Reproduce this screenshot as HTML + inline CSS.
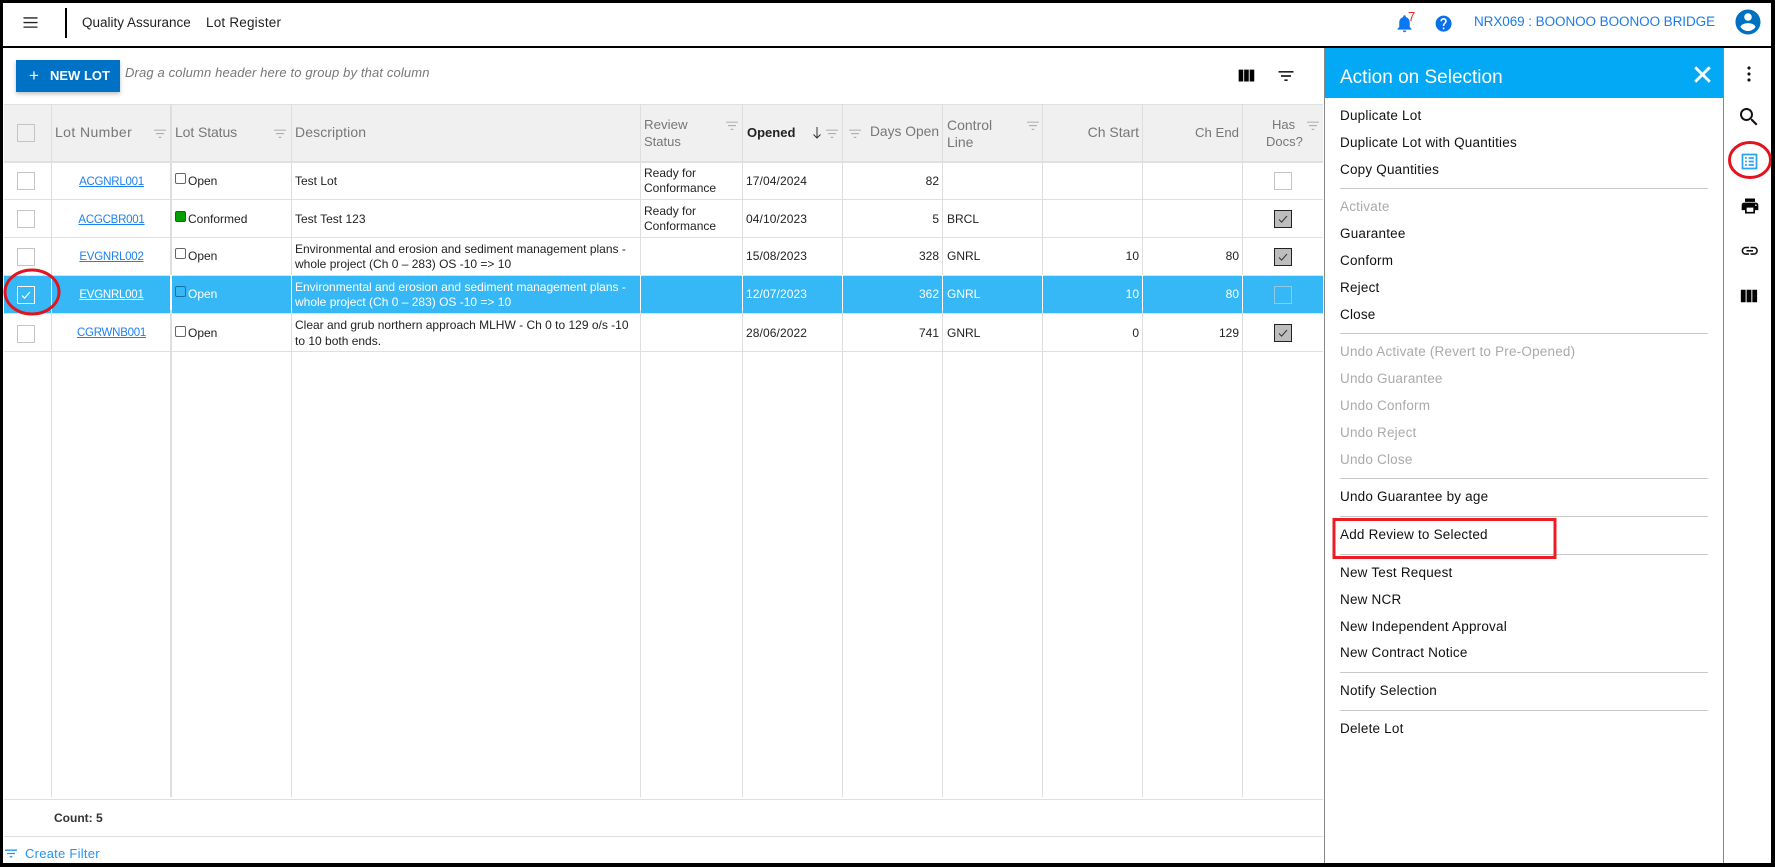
<!DOCTYPE html>
<html lang="en"><head><meta charset="utf-8"><title>Lot Register</title>
<style>
html,body{margin:0;padding:0;background:#fff;}
body{width:1775px;height:867px;overflow:hidden;position:relative;font-family:"Liberation Sans",sans-serif;color:#222;}
.a{position:absolute;}
.t{position:absolute;white-space:nowrap;line-height:16px;font-size:12px;color:#222;}
.h{position:absolute;white-space:nowrap;line-height:18px;font-size:14px;color:#777;}
.m{position:absolute;left:1340px;white-space:nowrap;line-height:18px;font-size:13.5px;color:#111;letter-spacing:.2px;}
.d{color:#aaa;}
.dv{position:absolute;left:1340px;width:368px;height:1px;background:#c8c8c8;}
.v{position:absolute;top:104px;height:693px;width:1px;background:#dedede;}
.r{position:absolute;left:4px;width:1319px;height:1px;background:#e0e0e0;}
.cb{position:absolute;left:17px;width:16px;height:16px;border:1px solid #c4c4c4;background:#fff;}
.ck{position:absolute;left:1274px;width:16px;height:16px;border:1px solid #c4c4c4;background:#fff;}
.on{background:#bdbdbd;border-color:#222;}
.s{position:absolute;left:175px;width:9px;height:9px;border:1px solid #666;border-radius:2px;background:#fff;}
a{color:#1e80f0;text-decoration:underline;}
.l{position:absolute;left:52px;width:119px;text-align:center;line-height:16px;font-size:11.5px;letter-spacing:-.25px;white-space:nowrap;}
.dt{letter-spacing:.1px;}
svg{position:absolute;display:block;}
</style></head><body>

<!-- top bar -->
<svg style="left:19.5px;top:12px" width="21" height="21" viewBox="0 0 24 24" fill="#222"><path d="M4 18h16v-1.5H4V18zm0-5.2h16v-1.5H4v1.5zM4 6v1.5h16V6H4z"/></svg>
<div class="a" style="left:65px;top:8px;width:2px;height:30px;background:#000"></div>
<span class="t" style="left:82px;top:15px;font-size:13.5px;color:#222">Quality Assurance</span>
<span class="t" style="left:206px;top:15px;font-size:13.5px;letter-spacing:.2px;color:#222">Lot Register</span>
<svg style="left:1393.5px;top:12.8px" width="21" height="21" viewBox="0 0 24 24" fill="#0a78f0"><path d="M12 22c1.1 0 2-.9 2-2h-4c0 1.1.89 2 2 2zm6-6v-5c0-3.07-1.64-5.64-4.5-6.32V4c0-.83-.67-1.5-1.5-1.5s-1.5.67-1.5 1.5v.68C7.63 5.36 6 7.92 6 11v5l-2 2v1h16v-1l-2-2z"/></svg>
<span class="t" style="left:1408px;top:9px;font-size:13px;color:#e22">7</span>
<svg style="left:1434.4px;top:14px" width="19.2" height="19.2" viewBox="0 0 24 24" fill="#0a70e8"><path d="M12 2C6.48 2 2 6.48 2 12s4.48 10 10 10 10-4.48 10-10S17.52 2 12 2zm1 17h-2v-2h2v2zm2.07-7.75l-.9.92C13.45 12.9 13 13.5 13 15h-2v-.5c0-1.1.45-2.1 1.17-2.83l1.24-1.26c.37-.36.59-.86.59-1.41 0-1.1-.9-2-2-2s-2 .9-2 2H8c0-2.21 1.79-4 4-4s4 1.79 4 4c0 .88-.36 1.68-.93 2.25z"/></svg>
<span class="t" style="left:1474px;top:14px;font-size:13.5px;letter-spacing:-.07px;color:#1a7de8">NRX069 : BOONOO BOONOO BRIDGE</span>
<svg style="left:1733px;top:7px" width="30" height="30" viewBox="0 0 24 24" fill="#0070c0"><path d="M12 2C6.48 2 2 6.48 2 12s4.48 10 10 10 10-4.48 10-10S17.52 2 12 2zm0 3c1.66 0 3 1.34 3 3s-1.34 3-3 3-3-1.34-3-3 1.34-3 3-3zm0 14.2c-2.5 0-4.71-1.28-6-3.22.03-1.99 4-3.08 6-3.08 1.99 0 5.97 1.09 6 3.08-1.29 1.94-3.5 3.22-6 3.22z"/></svg>
<div class="a" style="left:0;top:46px;width:1775px;height:2px;background:#000"></div>

<!-- toolbar -->
<div class="a" style="left:16px;top:60px;width:104px;height:32px;background:#0072c6;box-shadow:0 2px 4px rgba(0,0,0,.25)"></div>
<span class="t" style="left:29px;top:68px;font-size:17px;color:#fff">+</span>
<span class="t" style="left:50px;top:68px;font-size:13px;font-weight:bold;color:#fff">NEW LOT</span>
<span class="t" style="left:125px;top:65px;font-size:13px;font-style:italic;letter-spacing:.14px;color:#777">Drag a column header here to group by that column</span>
<svg style="left:1234.5px;top:64px" width="22" height="24" viewBox="0 0 24 24" fill="#000"><path d="M10 18h5V5h-5v13zm-6 0h5V5H4v13zM16 5v13h5V5h-5z"/></svg>
<svg style="left:1276px;top:66px" width="20" height="20" viewBox="0 0 24 24" fill="#222"><path d="M10 18h4v-2h-4v2zM3 6v2h18V6H3zm3 7h12v-2H6v2z"/></svg>

<!-- grid -->
<div class="a" style="left:4px;top:104px;width:1319px;height:57px;background:#f0f0f0"></div>
<div class="a" style="left:4px;top:275px;width:1319px;height:38px;background:#36b8f6"></div>
<div class="r" style="top:104px"></div><div class="r" style="top:161px;height:2px"></div><div class="r" style="top:199px"></div><div class="r" style="top:237px"></div><div class="r" style="top:275px"></div><div class="r" style="top:313px"></div><div class="r" style="top:351px"></div><div class="r" style="top:799px"></div><div class="r" style="top:836px"></div>
<div class="v" style="left:51px"></div><div class="v" style="left:170px;width:2px"></div><div class="v" style="left:291px"></div><div class="v" style="left:640px"></div><div class="v" style="left:742px"></div><div class="v" style="left:842px"></div><div class="v" style="left:942px"></div><div class="v" style="left:1042px"></div><div class="v" style="left:1142px"></div><div class="v" style="left:1242px"></div>

<!-- header cells -->
<div class="cb" style="top:124px;background:#f0f0f0"></div>
<span class="h" style="left:55px;top:123px;letter-spacing:.4px">Lot Number</span>
<span class="h" style="left:175px;top:123px;letter-spacing:-.1px">Lot Status</span>
<span class="h" style="left:295px;top:123px;letter-spacing:.1px">Description</span>
<span class="h" style="left:644px;top:116px;font-size:13.3px">Review</span><span class="h" style="left:644px;top:133px;font-size:13px">Status</span>
<span class="h" style="left:747px;top:124px;font-size:13px;font-weight:bold;color:#222">Opened</span>
<svg style="left:812px;top:127px" width="10" height="12" viewBox="0 0 10 12" fill="none" stroke="#333" stroke-width="1"><path d="M5 0v11M1.5 7.5L5 11l3.5-3.5"/></svg>
<span class="h" style="right:836px;top:123px;font-size:13.8px">Days Open</span>
<span class="h" style="left:947px;top:116px">Control</span><span class="h" style="left:947px;top:133px">Line</span>
<span class="h" style="right:636px;top:123px">Ch Start</span>
<span class="h" style="right:536px;top:124px;font-size:13.2px">Ch End</span>
<span class="h" style="left:1272px;top:116px;font-size:13px">Has</span><span class="h" style="left:1266px;top:133px;font-size:13px">Docs?</span>

<svg style="left:153.5px;top:128.5px" width="12" height="9.4" viewBox="3 5 18 14" fill="#999"><path d="M10 18h4v-1.2h-4V18zM3 6v1.2h18V6H3zm3 6.6h12v-1.2H6v1.2z"/></svg>
<svg style="left:274px;top:128.5px" width="12" height="9.4" viewBox="3 5 18 14" fill="#999"><path d="M10 18h4v-1.2h-4V18zM3 6v1.2h18V6H3zm3 6.6h12v-1.2H6v1.2z"/></svg>
<svg style="left:726px;top:120.5px" width="12" height="9.4" viewBox="3 5 18 14" fill="#999"><path d="M10 18h4v-1.2h-4V18zM3 6v1.2h18V6H3zm3 6.6h12v-1.2H6v1.2z"/></svg>
<svg style="left:826px;top:128.5px" width="12" height="9.4" viewBox="3 5 18 14" fill="#999"><path d="M10 18h4v-1.2h-4V18zM3 6v1.2h18V6H3zm3 6.6h12v-1.2H6v1.2z"/></svg>
<svg style="left:849px;top:128.5px" width="12" height="9.4" viewBox="3 5 18 14" fill="#999"><path d="M10 18h4v-1.2h-4V18zM3 6v1.2h18V6H3zm3 6.6h12v-1.2H6v1.2z"/></svg>
<svg style="left:1027px;top:120.5px" width="12" height="9.4" viewBox="3 5 18 14" fill="#999"><path d="M10 18h4v-1.2h-4V18zM3 6v1.2h18V6H3zm3 6.6h12v-1.2H6v1.2z"/></svg>
<svg style="left:1307px;top:120.5px" width="12" height="9.4" viewBox="3 5 18 14" fill="#999"><path d="M10 18h4v-1.2h-4V18zM3 6v1.2h18V6H3zm3 6.6h12v-1.2H6v1.2z"/></svg>

<!-- row 1 -->
<div class="cb" style="top:172px"></div>
<span class="l" style="top:174px"><a>ACGNRL001</a></span>
<div class="s" style="top:173px"></div><span class="t" style="left:188px;top:173px">Open</span>
<span class="t" style="left:295px;top:173px">Test Lot</span>
<span class="t" style="left:644px;top:165px">Ready for</span><span class="t" style="left:644px;top:180px">Conformance</span>
<span class="t dt" style="left:746px;top:173px">17/04/2024</span>
<span class="t" style="right:836px;top:173px">82</span>
<div class="ck" style="top:172px"></div>

<!-- row 2 -->
<div class="cb" style="top:210px"></div>
<span class="l" style="top:212px"><a>ACGCBR001</a></span>
<div class="s" style="top:211px;background:#00a000;border-color:#007000"></div><span class="t" style="left:188px;top:211px">Conformed</span>
<span class="t" style="left:295px;top:211px">Test Test 123</span>
<span class="t" style="left:644px;top:203px">Ready for</span><span class="t" style="left:644px;top:218px">Conformance</span>
<span class="t dt" style="left:746px;top:211px">04/10/2023</span>
<span class="t" style="right:836px;top:211px">5</span>
<span class="t" style="left:947px;top:211px">BRCL</span>
<div class="ck on" style="top:210px"></div>
<svg style="left:1277px;top:213px" width="12" height="12" viewBox="0 0 12 12" fill="none" stroke="#333" stroke-width="1"><path d="M2 6.5l2.6 2.6L10 3"/></svg>

<!-- row 3 -->
<div class="cb" style="top:248px"></div>
<span class="l" style="top:249px"><a>EVGNRL002</a></span>
<div class="s" style="top:248px"></div><span class="t" style="left:188px;top:248px">Open</span>
<span class="t" style="left:295px;top:241px">Environmental and erosion and sediment management plans -</span>
<span class="t" style="left:295px;top:256px">whole project (Ch 0 – 283) OS -10 =&gt; 10</span>
<span class="t dt" style="left:746px;top:248px">15/08/2023</span>
<span class="t" style="right:836px;top:248px">328</span>
<span class="t" style="left:947px;top:248px">GNRL</span>
<span class="t" style="right:636px;top:248px">10</span>
<span class="t" style="right:536px;top:248px">80</span>
<div class="ck on" style="top:248px"></div>
<svg style="left:1277px;top:251px" width="12" height="12" viewBox="0 0 12 12" fill="none" stroke="#333" stroke-width="1"><path d="M2 6.5l2.6 2.6L10 3"/></svg>

<!-- row 4 selected -->
<div class="a" style="left:51px;top:275px;width:1px;height:35px;background:#fff"></div>
<div class="a" style="left:170px;top:275px;width:2px;height:35px;background:#fff"></div>
<div class="a" style="left:291px;top:275px;width:1px;height:35px;background:#fff"></div>
<div class="a" style="left:640px;top:275px;width:1px;height:35px;background:#fff"></div>
<div class="a" style="left:742px;top:275px;width:1px;height:35px;background:#fff"></div>
<div class="a" style="left:842px;top:275px;width:1px;height:35px;background:#fff"></div>
<div class="a" style="left:942px;top:275px;width:1px;height:35px;background:#fff"></div>
<div class="a" style="left:1042px;top:275px;width:1px;height:35px;background:#fff"></div>
<div class="a" style="left:1142px;top:275px;width:1px;height:35px;background:#fff"></div>
<div class="a" style="left:1242px;top:275px;width:1px;height:35px;background:#fff"></div>
<div class="cb" style="top:286px;background:#36b8f6;border-color:#fff"></div>
<svg style="left:20px;top:289px" width="12" height="12" viewBox="0 0 12 12" fill="none" stroke="#fff" stroke-width="1.2"><path d="M2 6.5l2.6 2.6L10 3"/></svg>
<span class="l" style="top:287px"><a style="color:#fff">EVGNRL001</a></span>
<div class="s" style="top:286px;background:#36b8f6;border-color:#1670a8"></div><span class="t" style="left:188px;top:286px;color:#fff">Open</span>
<span class="t" style="left:295px;top:279px;color:#fff">Environmental and erosion and sediment management plans -</span>
<span class="t" style="left:295px;top:294px;color:#fff">whole project (Ch 0 – 283) OS -10 =&gt; 10</span>
<span class="t dt" style="left:746px;top:286px;color:#fff">12/07/2023</span>
<span class="t" style="right:836px;top:286px;color:#fff">362</span>
<span class="t" style="left:947px;top:286px;color:#fff">GNRL</span>
<span class="t" style="right:636px;top:286px;color:#fff">10</span>
<span class="t" style="right:536px;top:286px;color:#fff">80</span>
<div class="ck" style="top:286px;background:#36b8f6;border-color:#8fc9e6"></div>

<!-- row 5 -->
<div class="cb" style="top:325px"></div>
<span class="l" style="top:325px"><a>CGRWNB001</a></span>
<div class="s" style="top:326px"></div><span class="t" style="left:188px;top:325px">Open</span>
<span class="t" style="left:295px;top:317px">Clear and grub northern approach MLHW - Ch 0 to 129 o/s -10</span>
<span class="t" style="left:295px;top:333px">to 10 both ends.</span>
<span class="t dt" style="left:746px;top:325px">28/06/2022</span>
<span class="t" style="right:836px;top:325px">741</span>
<span class="t" style="left:947px;top:325px">GNRL</span>
<span class="t" style="right:636px;top:325px">0</span>
<span class="t" style="right:536px;top:325px">129</span>
<div class="ck on" style="top:324px"></div>
<svg style="left:1277px;top:327px" width="12" height="12" viewBox="0 0 12 12" fill="none" stroke="#333" stroke-width="1"><path d="M2 6.5l2.6 2.6L10 3"/></svg>

<!-- footer -->
<span class="t" style="left:54px;top:810px;font-weight:bold;color:#333">Count: 5</span>
<svg style="left:5px;top:848px" width="12" height="11" viewBox="3 5 18 14" fill="#2196f3"><path d="M10 18h4v-2h-4v2zM3 6v2h18V6H3zm3 7h12v-2H6v2z"/></svg>
<span class="t" style="left:25px;top:846px;font-size:13px;letter-spacing:.25px;color:#2196f3">Create Filter</span>

<!-- panel -->
<div class="a" style="left:1324px;top:48px;width:1px;height:819px;background:#888"></div>
<div class="a" style="left:1723px;top:48px;width:1px;height:819px;background:#888"></div>
<div class="a" style="left:1325px;top:48px;width:398px;height:50px;background:#03a9f4"></div>
<span class="t" style="left:1340px;top:68px;font-size:19px;line-height:20px;color:#fff">Action on Selection</span>
<svg style="left:1689px;top:60.5px" width="27" height="27" viewBox="0 0 24 24" fill="#fff" stroke="#fff" stroke-width=".5"><path d="M19 6.41L17.59 5 12 10.59 6.41 5 5 6.41 10.59 12 5 17.59 6.41 19 12 13.41 17.59 19 19 17.59 13.41 12 19 6.41z"/></svg>

<span class="m" style="top:107px">Duplicate Lot</span>
<span class="m" style="top:134px">Duplicate Lot with Quantities</span>
<span class="m" style="top:161px">Copy Quantities</span>
<div class="dv" style="top:188px"></div>
<span class="m d" style="top:198px">Activate</span>
<span class="m" style="top:225px">Guarantee</span>
<span class="m" style="top:252px">Conform</span>
<span class="m" style="top:279px">Reject</span>
<span class="m" style="top:306px">Close</span>
<div class="dv" style="top:333px"></div>
<span class="m d" style="top:343px">Undo Activate (Revert to Pre-Opened)</span>
<span class="m d" style="top:370px">Undo Guarantee</span>
<span class="m d" style="top:397px">Undo Conform</span>
<span class="m d" style="top:424px">Undo Reject</span>
<span class="m d" style="top:451px">Undo Close</span>
<div class="dv" style="top:478px"></div>
<span class="m" style="top:488px">Undo Guarantee by age</span>
<div class="dv" style="top:516px"></div>
<span class="m" style="top:526px">Add Review to Selected</span>
<div class="dv" style="top:554px"></div>
<span class="m" style="top:564px">New Test Request</span>
<span class="m" style="top:591px">New NCR</span>
<span class="m" style="top:618px">New Independent Approval</span>
<span class="m" style="top:644px">New Contract Notice</span>
<div class="dv" style="top:672px"></div>
<span class="m" style="top:682px">Notify Selection</span>
<div class="dv" style="top:710px"></div>
<span class="m" style="top:720px">Delete Lot</span>

<!-- side toolbar -->
<svg style="left:1737px;top:62px" width="24" height="24" viewBox="0 0 24 24" fill="#111"><path d="M12 7.6c.9 0 1.6-.7 1.6-1.6s-.7-1.6-1.6-1.6-1.6.7-1.6 1.6.7 1.6 1.6 1.6zm0 2.8c-.9 0-1.6.7-1.6 1.6s.7 1.6 1.6 1.6 1.6-.7 1.6-1.6-.7-1.6-1.6-1.6zm0 6c-.9 0-1.6.7-1.6 1.6s.7 1.6 1.6 1.6 1.6-.7 1.6-1.6-.7-1.6-1.6-1.6z"/></svg>
<svg style="left:1737px;top:104.5px" width="24" height="24" viewBox="0 0 24 24" fill="#111"><path d="M15.5 14h-.79l-.28-.27C15.41 12.59 16 11.11 16 9.5 16 5.91 13.09 3 9.5 3S3 5.91 3 9.5 5.91 16 9.5 16c1.61 0 3.09-.59 4.23-1.57l.27.28v.79l5 4.99L20.49 19l-4.99-5zm-6 0C7.01 14 5 11.99 5 9.5S7.01 5 9.5 5 14 7.01 14 9.5 11.99 14 9.5 14z"/></svg>
<svg style="left:1739px;top:150.5px" width="21" height="21" viewBox="0 0 24 24" fill="#29a3f0"><path d="M19 5v14H5V5h14m1.1-2H3.9c-.5 0-.9.4-.9.9v16.2c0 .4.4.9.9.9h16.2c.4 0 .9-.5.9-.9V3.9c0-.5-.5-.9-.9-.9zM11 7h6v2h-6V7zm0 4h6v2h-6v-2zm0 4h6v2h-6zM7 7h2v2H7zm0 4h2v2H7zm0 4h2v2H7z"/></svg>
<svg style="left:1739.5px;top:196px" width="20" height="20" viewBox="0 0 24 24" fill="#000"><path d="M19 8H5c-1.66 0-3 1.34-3 3v6h4v4h12v-4h4v-6c0-1.66-1.34-3-3-3zm-3 11H8v-5h8v5zm3-7c-.55 0-1-.45-1-1s.45-1 1-1 1 .45 1 1-.45 1-1 1zm-1-9H6v4h12V3z"/></svg>
<svg style="left:1739.5px;top:241px" width="19.5" height="19.5" viewBox="0 0 24 24" fill="#111"><path d="M3.9 12c0-1.71 1.39-3.1 3.1-3.1h4V7H7c-2.76 0-5 2.24-5 5s2.24 5 5 5h4v-1.9H7c-1.71 0-3.1-1.39-3.1-3.1zM8 13h8v-2H8v2zm9-6h-4v1.9h4c1.71 0 3.1 1.39 3.1 3.1s-1.39 3.1-3.1 3.1h-4V17h4c2.76 0 5-2.24 5-5s-2.24-5-5-5z"/></svg>
<svg style="left:1737px;top:285px" width="23" height="23" viewBox="0 0 24 24" fill="#000"><path d="M10 18h5V5h-5v13zm-6 0h5V5H4v13zM16 5v13h5V5h-5z"/></svg>

<!-- annotations -->
<svg style="left:0;top:0" width="1775" height="867" viewBox="0 0 1775 867" fill="none" stroke="#e0151f" stroke-width="3">
<ellipse cx="32" cy="292" rx="27" ry="22"/>
<ellipse cx="1750" cy="160" rx="20.5" ry="17.5"/>
<rect x="1334" y="519.5" width="221" height="38" stroke="#ed1c24"/>
</svg>

<!-- outer frame -->
<div class="a" style="left:0;top:0;width:1768px;height:860px;border-style:solid;border-color:#000;border-width:3px 4px 4px 3px"></div>
</body></html>
